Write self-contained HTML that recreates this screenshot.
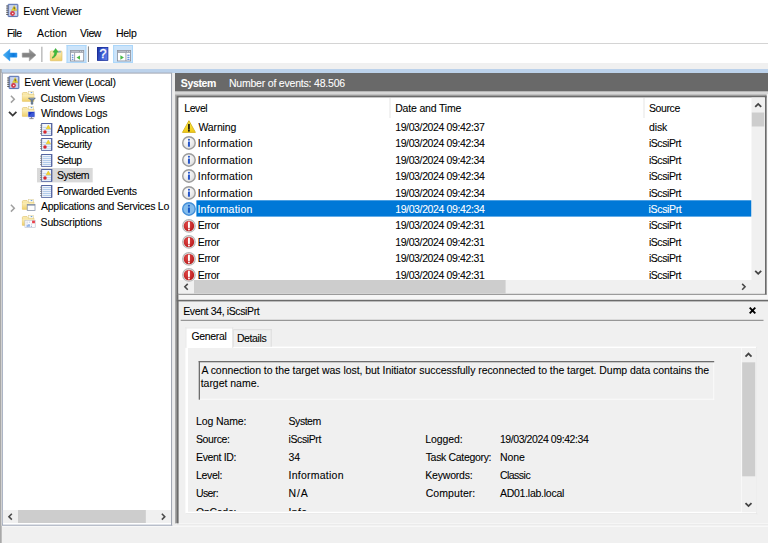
<!DOCTYPE html>
<html><head><meta charset="utf-8"><title>Event Viewer</title>
<style>
html,body{margin:0;padding:0;}
body{width:768px;height:543px;overflow:hidden;background:#f0f0f0;position:relative;font-family:"Liberation Sans",sans-serif;}
.t{position:absolute;white-space:nowrap;line-height:14px;height:14px;-webkit-text-stroke:0.08px currentColor;}
.b{position:absolute;}
svg{position:absolute;overflow:visible;}
</style></head><body>

<svg style="left:0;top:0" width="768" height="543" viewBox="0 0 768 543"><rect x="0" y="0" width="768" height="63" fill="#fff"/><rect x="0" y="43" width="768" height="1" fill="#d4d4d4"/><rect x="0" y="63" width="768" height="6" fill="#f0f0f0"/><rect x="0" y="69" width="768" height="4" fill="#bcd2eb"/><rect x="41.2" y="46.7" width="1.3" height="15.3" fill="#b4b4b4"/><rect x="66.6" y="45" width="19.8" height="17.9" fill="#cce4fa"/><rect x="66.6" y="45" width="19.8" height="1" fill="#aad6fa"/><rect x="66.6" y="61.9" width="19.8" height="1" fill="#aad6fa"/><rect x="66.6" y="45" width="1" height="17.9" fill="#aad6fa"/><rect x="85.39999999999999" y="45" width="1" height="17.9" fill="#aad6fa"/><rect x="87.9" y="46.4" width="1.1" height="15.6" fill="#8c8c8c"/><rect x="113.1" y="45" width="19.9" height="17.9" fill="#cce4fa"/><rect x="113.1" y="45" width="19.9" height="1" fill="#aad6fa"/><rect x="113.1" y="61.9" width="19.9" height="1" fill="#aad6fa"/><rect x="113.1" y="45" width="1" height="17.9" fill="#aad6fa"/><rect x="132.0" y="45" width="1" height="17.9" fill="#aad6fa"/><rect x="0" y="69" width="1.7" height="474" fill="#a8a8a8"/><rect x="1.7" y="73" width="169.5" height="452.8" fill="#fff"/><rect x="2.1" y="72.6" width="170.1" height="1" fill="#a3a8b3"/><rect x="2.1" y="72.6" width="0.8" height="453" fill="#98a2b6"/><rect x="171" y="73" width="1.2" height="452.8" fill="#a3a8b3"/><rect x="2.1" y="524.7" width="170.1" height="1.1" fill="#939cae"/><rect x="172.3" y="73" width="2.7" height="452" fill="#ececec"/><rect x="37" y="168" width="55.7" height="14.4" fill="#d9d9d9"/><rect x="2.9" y="510" width="168.1" height="13" fill="#f0f0f0"/><rect x="18" y="510" width="127.8" height="13" fill="#cdcdcd"/><rect x="175" y="73" width="593" height="18.6" fill="#696969"/><rect x="175" y="91.6" width="593" height="2.8" fill="#d6d6d6"/><rect x="175" y="94.4" width="591.8" height="429" fill="#a8a8a8"/><rect x="176.6" y="95.8" width="591.4" height="428.5" fill="#6b6b6b"/><rect x="178.6" y="97.6" width="589.4" height="426.7" fill="#f0f0f0"/><rect x="178.6" y="97.6" width="586.3" height="196" fill="#fff"/><rect x="178.6" y="293.6" width="588.2" height="1.2" fill="#6b6b6b"/><rect x="764.9" y="95.8" width="1.9" height="199" fill="#6b6b6b"/><rect x="766.8" y="94.4" width="1.2" height="201" fill="#f8f8f8"/><rect x="177.5" y="294.8" width="590.5" height="5" fill="#f6f6f6"/><rect x="175" y="294.8" width="1.6" height="5" fill="#a8a8a8"/><rect x="176.6" y="294.8" width="1.8" height="5" fill="#6b6b6b"/><rect x="389.5" y="98" width="1" height="20" fill="#e5e5e5"/><rect x="643.5" y="98" width="1" height="20" fill="#e5e5e5"/><rect x="196.4" y="200.3" width="555.1" height="16.3" fill="#0078d7"/><rect x="751.5" y="97.6" width="13.4" height="182.5" fill="#f0f0f0"/><rect x="751.8" y="112.5" width="12.4" height="14" fill="#cdcdcd"/><rect x="178.6" y="280" width="586.3" height="13.6" fill="#f0f0f0"/><rect x="194" y="280" width="311.6" height="13.6" fill="#cdcdcd"/><rect x="176.6" y="299.8" width="591.4" height="1.6" fill="#6b6b6b"/><rect x="180.7" y="319.8" width="582.8" height="1" fill="#828282"/><rect x="185.4" y="346.6" width="571.8" height="167.6" fill="#fff"/><rect x="185.4" y="513.2" width="571.8" height="1" fill="#e6e6e6"/><rect x="756.1999999999999" y="346.6" width="1" height="167.6" fill="#e6e6e6"/><rect x="188" y="348" width="553.3" height="163.8" fill="#f0f0f0"/><rect x="233" y="329.2" width="38.7" height="17.5" fill="#f0f0f0"/><rect x="233" y="329.2" width="38.7" height="1" fill="#dcdcdc"/><rect x="233" y="329.2" width="1" height="17.5" fill="#dcdcdc"/><rect x="270.7" y="329.2" width="1" height="17.5" fill="#dcdcdc"/><rect x="185.4" y="327.4" width="47.8" height="20.5" fill="#fff"/><rect x="185.4" y="327.4" width="47.8" height="1" fill="#e4e4e4"/><rect x="185.4" y="327.4" width="1" height="20.5" fill="#e4e4e4"/><rect x="232.2" y="327.4" width="1" height="20.5" fill="#e4e4e4"/><rect x="198.7" y="361" width="515.5" height="38.7" fill="#f0f0f0"/><rect x="198.7" y="398.7" width="515.5" height="1" fill="#fbfbfb"/><rect x="713.2" y="361" width="1" height="38.7" fill="#fbfbfb"/><rect x="198.7" y="361" width="515.5" height="1.3" fill="#6e6e6e"/><rect x="198.7" y="361" width="1.3" height="38.7" fill="#6e6e6e"/><rect x="741.7" y="348" width="14.7" height="164.3" fill="#f0f0f0"/><rect x="742.2" y="362.3" width="13" height="114" fill="#cdcdcd"/><rect x="176" y="523.4" width="592" height="1.2" fill="#fbfbfb"/><rect x="2" y="525.8" width="766" height="1" fill="#fafafa"/></svg>
<svg style="left:5.9px;top:4.1px" width="12.2" height="12.9" viewBox="0 0 12.2 12.9"><rect x="2.1" y="0.3" width="9.8" height="12.3" rx="0.5" fill="#a3b5de" stroke="#566eb0" stroke-width="1"/><rect x="3.3" y="1.3" width="7.6" height="10.3" fill="#cdd8f0"/><path d="M3.3 3.2h7.6M3.3 5.2h7.6M3.3 7.2h7.6M3.3 9.2h7.6" stroke="#b4c2e2" stroke-width="0.5"/><path d="M0.2 2h2.2M0.2 4.1h2.2M0.2 6.2h2.2M0.2 8.3h2.2M0.2 10.4h2.2" stroke="#4a4a4a" stroke-width="1"/><path d="M8.2 1.6 L10.9 6.6 H5.5Z" fill="#ead32a" stroke="#c8ac18" stroke-width="0.4"/><path d="M8.2 3.2V5" stroke="#222" stroke-width="0.8"/><circle cx="8.2" cy="5.9" r="0.4" fill="#222"/><circle cx="6.5" cy="9.5" r="2.4" fill="#d23a4a"/><circle cx="6.7" cy="9.5" r="0.8" fill="#fbe4e6"/></svg>
<span class="t" style="left:23.30px;top:4.30px;font-size:10.5px;color:#000;letter-spacing:-0.290px;">Event Viewer</span>
<span class="t" style="left:7.00px;top:26.30px;font-size:10.5px;color:#000;letter-spacing:-0.641px;">File</span>
<span class="t" style="left:37.10px;top:26.30px;font-size:10.5px;color:#000;letter-spacing:0.113px;">Action</span>
<span class="t" style="left:80.00px;top:26.30px;font-size:10.5px;color:#000;letter-spacing:-0.376px;">View</span>
<span class="t" style="left:116.00px;top:26.30px;font-size:10.5px;color:#000;letter-spacing:-0.286px;">Help</span>
<svg style="left:0;top:0" width="0" height="0"><defs><linearGradient id="gBack" x1="0" y1="0" x2="1" y2="0"><stop offset="0" stop-color="#4cb4f6"/><stop offset="0.75" stop-color="#0a78dc"/><stop offset="1" stop-color="#2a90e8"/></linearGradient><linearGradient id="gFwd" x1="0" y1="0" x2="0" y2="1"><stop offset="0" stop-color="#a4a4a4"/><stop offset="0.5" stop-color="#808080"/><stop offset="1" stop-color="#9a9a9a"/></linearGradient><linearGradient id="gHelp" x1="0" y1="0" x2="1" y2="0.3"><stop offset="0" stop-color="#1a2f9c"/><stop offset="0.6" stop-color="#3c5cd4"/><stop offset="1" stop-color="#5a7ae6"/></linearGradient><linearGradient id="gFold" x1="0" y1="0" x2="0" y2="1"><stop offset="0" stop-color="#fbeeb8"/><stop offset="1" stop-color="#efcf6a"/></linearGradient><radialGradient id="gInfo" cx="0.4" cy="0.35" r="0.7"><stop offset="0" stop-color="#ffffff"/><stop offset="1" stop-color="#dcdcdc"/></radialGradient><radialGradient id="gErr" cx="0.4" cy="0.35" r="0.7"><stop offset="0" stop-color="#e04848"/><stop offset="1" stop-color="#b81c1c"/></radialGradient><linearGradient id="gWarn" x1="0" y1="0" x2="0" y2="1"><stop offset="0" stop-color="#fff04a"/><stop offset="1" stop-color="#f0c818"/></linearGradient></defs></svg>
<svg style="left:2.5px;top:48.6px" width="14.2" height="12.2" viewBox="0 0 14.2 12.2"><path d="M0.2 6.1 L6.9 0.2 V3.9 H13.7 Q14 3.9 14 4.3 V7.9 Q14 8.3 13.7 8.3 H6.9 V12Z" fill="url(#gBack)" stroke="#3aa0f0" stroke-width="0.5"/></svg>
<svg style="left:22.2px;top:48.6px" width="14.2" height="12.2" viewBox="0 0 14.2 12.2"><path d="M14 6.1 L7.3 0.2 V3.9 H0.5 Q0.2 3.9 0.2 4.3 V7.9 Q0.2 8.3 0.5 8.3 H7.3 V12Z" fill="url(#gFwd)" stroke="#9a9a9a" stroke-width="0.5"/></svg>
<svg style="left:50px;top:48.2px" width="12.4" height="13" viewBox="0 0 12.4 13"><path d="M0.3 4 Q0.3 3 1.2 3 H11 Q12 3 12 4 V12.4 Q12 12.8 11.6 12.8 H0.7 Q0.3 12.8 0.3 12.4Z" fill="url(#gFold)" stroke="#dcbc5c" stroke-width="0.6"/><rect x="8.4" y="3.3" width="2.4" height="1.1" fill="#5a94dc"/><path d="M2 9.6 C3.6 8.6 4.6 6.6 4.6 4.2 H3.1 L5.6 0.4 L8.4 4.2 H6.8 C6.8 7.2 5 9.2 2.6 10.2Z" fill="#3cbc3c" stroke="#249424" stroke-width="0.4"/></svg>
<svg style="left:69.9px;top:50px" width="14.1" height="11.4" viewBox="0 0 14.1 11.4"><rect x="0.4" y="0.4" width="13.3" height="10.6" fill="#fff" stroke="#878c98" stroke-width="0.8"/><rect x="0.4" y="0.4" width="13.3" height="2.4" fill="#979da8"/><path d="M1.4 1.5h7.6" stroke="#c8ccd4" stroke-width="0.7"/><path d="M10 1.5h1.2M12 1.5h1" stroke="#d8dce4" stroke-width="0.8"/><path d="M4.6 2.8V11" stroke="#878c98" stroke-width="0.8"/><path d="M1.8 5.2h1.6M1.8 7.3h1.6M1.8 9.3h1.6" stroke="#3c78d8" stroke-width="1"/><path d="M10 5.4 V9.8 L6.5 7.6Z" fill="#48b848"/></svg>
<svg style="left:96.9px;top:47.3px" width="11.2" height="13.7" viewBox="0 0 11.2 13.7"><rect x="0" y="0" width="11.2" height="13.7" rx="0.6" fill="url(#gHelp)"/><rect x="0.3" y="0.3" width="10.6" height="13.1" fill="none" stroke="#16288c" stroke-width="0.6"/></svg>
<span class="t" style="left:99.4px;top:47.3px;font-size:12.5px;color:#fff;-webkit-text-stroke:0.3px #fff;">?</span>
<svg style="left:116.8px;top:50px" width="14" height="11.4" viewBox="0 0 14.1 11.4"><rect x="0.4" y="0.4" width="13.3" height="10.6" fill="#fff" stroke="#878c98" stroke-width="0.8"/><rect x="0.4" y="0.4" width="13.3" height="2.4" fill="#979da8"/><path d="M1.4 1.5h7.6" stroke="#c8ccd4" stroke-width="0.7"/><path d="M10 1.5h1.2M12 1.5h1" stroke="#d8dce4" stroke-width="0.8"/><path d="M9 2.8V11" stroke="#878c98" stroke-width="0.8"/><path d="M10.4 5.2h2.2M10.4 7.3h2.2M10.4 9.3h2.2" stroke="#3c78d8" stroke-width="1"/><path d="M3.4 5.2 V9.8 L7 7.5Z" fill="#48b848"/></svg>
<span class="t" style="left:24.20px;top:74.90px;font-size:10.5px;color:#000;letter-spacing:-0.262px;">Event Viewer (Local)</span>
<span class="t" style="left:40.50px;top:90.50px;font-size:10.5px;color:#000;letter-spacing:-0.220px;">Custom Views</span>
<span class="t" style="left:41.00px;top:106.00px;font-size:10.5px;color:#000;letter-spacing:-0.166px;">Windows Logs</span>
<span class="t" style="left:56.90px;top:121.60px;font-size:10.5px;color:#000;letter-spacing:0.142px;">Application</span>
<span class="t" style="left:56.90px;top:137.10px;font-size:10.5px;color:#000;letter-spacing:-0.420px;">Security</span>
<span class="t" style="left:56.90px;top:152.70px;font-size:10.5px;color:#000;letter-spacing:-0.563px;">Setup</span>
<span class="t" style="left:56.90px;top:168.20px;font-size:10.5px;color:#000;letter-spacing:-0.473px;">System</span>
<span class="t" style="left:56.90px;top:183.80px;font-size:10.5px;color:#000;letter-spacing:-0.345px;">Forwarded Events</span>
<span class="t" style="left:41.00px;top:199.40px;font-size:10.5px;color:#000;letter-spacing:-0.242px;">Applications and Services Lo</span>
<span class="t" style="left:40.50px;top:214.90px;font-size:10.5px;color:#000;letter-spacing:-0.128px;">Subscriptions</span>
<svg style="left:7px;top:76.1px" width="12.2" height="12.9" viewBox="0 0 12.2 12.9"><rect x="2.1" y="0.3" width="9.8" height="12.3" rx="0.5" fill="#a3b5de" stroke="#566eb0" stroke-width="1"/><rect x="3.3" y="1.3" width="7.6" height="10.3" fill="#cdd8f0"/><path d="M3.3 3.2h7.6M3.3 5.2h7.6M3.3 7.2h7.6M3.3 9.2h7.6" stroke="#b4c2e2" stroke-width="0.5"/><path d="M0.2 2h2.2M0.2 4.1h2.2M0.2 6.2h2.2M0.2 8.3h2.2M0.2 10.4h2.2" stroke="#4a4a4a" stroke-width="1"/><path d="M8.2 1.6 L10.9 6.6 H5.5Z" fill="#ead32a" stroke="#c8ac18" stroke-width="0.4"/><path d="M8.2 3.2V5" stroke="#222" stroke-width="0.8"/><circle cx="8.2" cy="5.9" r="0.4" fill="#222"/><circle cx="6.5" cy="9.5" r="2.4" fill="#d23a4a"/><circle cx="6.7" cy="9.5" r="0.8" fill="#fbe4e6"/></svg>
<svg style="left:22.2px;top:90.6px" width="13.6" height="13.6" viewBox="0 0 14 14"><path d="M0.4 2.6 Q0.4 1.6 1.4 1.6 H5.2 L6.4 2.8 H11.4 Q12.2 2.8 12.2 3.6 V10.6 H0.4Z" fill="url(#gFold)" stroke="#dcbc5c" stroke-width="0.6"/><rect x="6.6" y="0.6" width="5" height="2.6" fill="#fffdf4" stroke="#d8c98e" stroke-width="0.5"/><rect x="9" y="1.2" width="1.6" height="0.9" fill="#4c8cd8"/><path d="M0.4 4.2 H12.2 V10.6 H0.4Z" fill="url(#gFold)"/><path d="M6.6 7.2 H13.8 L11.2 10 V13.6 H9.4 V10Z" fill="#6d8299" stroke="#44586e" stroke-width="0.5"/><path d="M7.8 7.9h4.8" stroke="#aebccb" stroke-width="0.6"/></svg>
<svg style="left:22.2px;top:106px" width="13.6" height="13.6" viewBox="0 0 14 14"><path d="M0.4 2.6 Q0.4 1.6 1.4 1.6 H5.2 L6.4 2.8 H11.4 Q12.2 2.8 12.2 3.6 V10.6 H0.4Z" fill="url(#gFold)" stroke="#dcbc5c" stroke-width="0.6"/><rect x="6.6" y="0.6" width="5" height="2.6" fill="#fffdf4" stroke="#d8c98e" stroke-width="0.5"/><rect x="9" y="1.2" width="1.6" height="0.9" fill="#4c8cd8"/><path d="M0.4 4.2 H12.2 V10.6 H0.4Z" fill="url(#gFold)"/><rect x="6.2" y="5.9" width="7" height="5.5" fill="#1c34c0" stroke="#d4daf0" stroke-width="0.6"/><path d="M7 10.6 L9.6 7.4 L12.6 6.6 V10.8Z" fill="#4a6ae0" opacity="0.7"/><path d="M7.6 13h4.4" stroke="#778" stroke-width="0.9"/><path d="M9.8 11.5v1.2" stroke="#778" stroke-width="1.2"/></svg>
<svg style="left:39.9px;top:122.8px" width="12.2" height="12.9" viewBox="0 0 12.2 12.9"><rect x="1.6" y="0.5" width="10.1" height="12" fill="#f2f6fc" stroke="#6070a8" stroke-width="0.9"/><path d="M1.6 0.5 H11.7 V12.5" fill="none" stroke="#5464a0" stroke-width="1.2"/><path d="M0.2 2.2h2M0.2 4.3h2M0.2 6.4h2M0.2 8.5h2M0.2 10.6h2" stroke="#777" stroke-width="0.9"/><path d="M3 4.4h3M3 6.6h8M3 8.7h8M3 10.8h8" stroke="#aac4e6" stroke-width="0.7"/><path d="M8.3 2 L10.6 5.8 H6Z" fill="#f4d62c" stroke="#d0b01c" stroke-width="0.4"/><circle cx="5" cy="8.9" r="1.75" fill="#d8282f"/></svg>
<svg style="left:39.9px;top:138.3px" width="12.2" height="12.9" viewBox="0 0 12.2 12.9"><rect x="1.6" y="0.5" width="10.1" height="12" fill="#f2f6fc" stroke="#6070a8" stroke-width="0.9"/><path d="M1.6 0.5 H11.7 V12.5" fill="none" stroke="#5464a0" stroke-width="1.2"/><path d="M0.2 2.2h2M0.2 4.3h2M0.2 6.4h2M0.2 8.5h2M0.2 10.6h2" stroke="#777" stroke-width="0.9"/><path d="M3 4.4h3M3 6.6h8M3 8.7h8M3 10.8h8" stroke="#aac4e6" stroke-width="0.7"/><path d="M8.3 2 L10.6 5.8 H6Z" fill="#f4d62c" stroke="#d0b01c" stroke-width="0.4"/><circle cx="5" cy="8.9" r="1.75" fill="#d8282f"/></svg>
<svg style="left:39.9px;top:153.9px" width="12.2" height="12.9" viewBox="0 0 12.2 12.9"><rect x="1.6" y="0.5" width="10.1" height="12" fill="#f2f6fc" stroke="#6070a8" stroke-width="0.9"/><path d="M1.6 0.5 H11.7 V12.5" fill="none" stroke="#5464a0" stroke-width="1.2"/><path d="M0.2 2.2h2M0.2 4.3h2M0.2 6.4h2M0.2 8.5h2M0.2 10.6h2" stroke="#777" stroke-width="0.9"/><path d="M3 2.6h8M3 4.6h8M3 6.6h8M3 8.6h8M3 10.6h8" stroke="#a4c2e6" stroke-width="0.9"/></svg>
<svg style="left:39.9px;top:169.4px" width="12.2" height="12.9" viewBox="0 0 12.2 12.9"><rect x="1.6" y="0.5" width="10.1" height="12" fill="#f2f6fc" stroke="#6070a8" stroke-width="0.9"/><path d="M1.6 0.5 H11.7 V12.5" fill="none" stroke="#5464a0" stroke-width="1.2"/><path d="M0.2 2.2h2M0.2 4.3h2M0.2 6.4h2M0.2 8.5h2M0.2 10.6h2" stroke="#777" stroke-width="0.9"/><path d="M3 4.4h3M3 6.6h8M3 8.7h8M3 10.8h8" stroke="#aac4e6" stroke-width="0.7"/><path d="M8.3 2 L10.6 5.8 H6Z" fill="#f4d62c" stroke="#d0b01c" stroke-width="0.4"/><circle cx="5" cy="8.9" r="1.75" fill="#d8282f"/></svg>
<svg style="left:39.9px;top:185px" width="12.2" height="12.9" viewBox="0 0 12.2 12.9"><rect x="1.6" y="0.5" width="10.1" height="12" fill="#f2f6fc" stroke="#6070a8" stroke-width="0.9"/><path d="M1.6 0.5 H11.7 V12.5" fill="none" stroke="#5464a0" stroke-width="1.2"/><path d="M0.2 2.2h2M0.2 4.3h2M0.2 6.4h2M0.2 8.5h2M0.2 10.6h2" stroke="#777" stroke-width="0.9"/><path d="M3 2.6h8M3 4.6h8M3 6.6h8M3 8.6h8M3 10.6h8" stroke="#a4c2e6" stroke-width="0.9"/></svg>
<svg style="left:22.2px;top:199.4px" width="13.6" height="13.6" viewBox="0 0 14 14"><path d="M0.4 2.6 Q0.4 1.6 1.4 1.6 H5.2 L6.4 2.8 H11.4 Q12.2 2.8 12.2 3.6 V10.6 H0.4Z" fill="url(#gFold)" stroke="#dcbc5c" stroke-width="0.6"/><rect x="6.6" y="0.6" width="5" height="2.6" fill="#fffdf4" stroke="#d8c98e" stroke-width="0.5"/><rect x="9" y="1.2" width="1.6" height="0.9" fill="#4c8cd8"/><path d="M0.4 4.2 H12.2 V10.6 H0.4Z" fill="url(#gFold)"/><rect x="5.4" y="5.6" width="8" height="6.2" fill="#fdfdfd" stroke="#8794aa" stroke-width="0.8"/><path d="M5.4 6.2h8" stroke="#7b889f" stroke-width="1.1"/></svg>
<svg style="left:22.2px;top:215px" width="13.6" height="13.6" viewBox="0 0 14 14"><path d="M0.4 2.6 Q0.4 1.6 1.4 1.6 H5.2 L6.4 2.8 H11.4 Q12.2 2.8 12.2 3.6 V10.6 H0.4Z" fill="url(#gFold)" stroke="#dcbc5c" stroke-width="0.6"/><rect x="6.6" y="0.6" width="5" height="2.6" fill="#fffdf4" stroke="#d8c98e" stroke-width="0.5"/><rect x="9" y="1.2" width="1.6" height="0.9" fill="#4c8cd8"/><path d="M0.4 4.2 H12.2 V10.6 H0.4Z" fill="url(#gFold)"/><rect x="3" y="5.4" width="10.6" height="7.4" fill="#fcfcfe" stroke="#b4bccc" stroke-width="0.6"/><path d="M4.6 7.4h1.4M7 7.4h1.4M4.6 9.4h1.4M9.2 9.4h1.2" stroke="#b0bcd8" stroke-width="0.8"/><path d="M4.6 11.4h1.6M7.2 9.6v2.4" stroke="#3c78d8" stroke-width="1.1"/><path d="M9.6 11v1.4" stroke="#8aa0c8" stroke-width="0.9"/><rect x="10.4" y="5.8" width="2.9" height="2.7" fill="#e8404c"/></svg>
<svg style="left:0;top:0" width="768" height="543"><path d="M10.9 95.8 L14.299999999999999 99.2 L10.9 102.60000000000001" fill="none" stroke="#a0a0a0" stroke-width="1.5"/></svg>
<svg style="left:0;top:0" width="768" height="543"><path d="M9.0 111.85000000000001 L12.7 115.55 L16.4 111.85000000000001" fill="none" stroke="#383838" stroke-width="1.8"/></svg>
<svg style="left:0;top:0" width="768" height="543"><path d="M10.9 204.79999999999998 L14.299999999999999 208.2 L10.9 211.6" fill="none" stroke="#a0a0a0" stroke-width="1.5"/></svg>
<svg style="left:0;top:0" width="768" height="543"><path d="M11.85 513.8000000000001 L8.950000000000001 516.7 L11.85 519.6" fill="none" stroke="#4a4a4a" stroke-width="1.6"/></svg>
<svg style="left:0;top:0" width="768" height="543"><path d="M161.85000000000002 513.8000000000001 L164.75 516.7 L161.85000000000002 519.6" fill="none" stroke="#4a4a4a" stroke-width="1.6"/></svg>
<span class="t" style="left:180.80px;top:75.80px;font-size:10.5px;color:#fff;letter-spacing:-0.352px;font-weight:bold;">System</span>
<span class="t" style="left:228.90px;top:75.80px;font-size:10.5px;color:#fff;letter-spacing:-0.197px;">Number of events: 48.506</span>
<span class="t" style="left:184.20px;top:101.20px;font-size:10.5px;color:#000;letter-spacing:-0.402px;">Level</span>
<span class="t" style="left:395.20px;top:101.20px;font-size:10.5px;color:#000;letter-spacing:-0.175px;">Date and Time</span>
<span class="t" style="left:648.90px;top:101.20px;font-size:10.5px;color:#000;letter-spacing:-0.376px;">Source</span>
<span class="t" style="left:198.45px;top:119.70px;font-size:10.5px;color:#000;letter-spacing:-0.136px;">Warning</span>
<span class="t" style="left:395.20px;top:119.70px;font-size:10.5px;color:#000;letter-spacing:-0.375px;">19/03/2024 09:42:37</span>
<span class="t" style="left:648.90px;top:119.70px;font-size:10.5px;color:#000;letter-spacing:-0.079px;">disk</span>
<svg style="left:182.3px;top:120.0px" width="13.9" height="13.9" viewBox="0 0 14 14"><path d="M7 0.7 L13.5 12.5 H0.5Z" fill="url(#gWarn)" stroke="#d4b21a" stroke-width="0.9" stroke-linejoin="round"/><path d="M7 4.6V9" stroke="#111" stroke-width="1.7" stroke-linecap="round"/><circle cx="7" cy="10.8" r="0.95" fill="#111"/></svg>
<span class="t" style="left:197.80px;top:136.15px;font-size:10.5px;color:#000;letter-spacing:0.237px;">Information</span>
<span class="t" style="left:395.20px;top:136.15px;font-size:10.5px;color:#000;letter-spacing:-0.375px;">19/03/2024 09:42:34</span>
<span class="t" style="left:648.90px;top:136.15px;font-size:10.5px;color:#000;letter-spacing:-0.428px;">iScsiPrt</span>
<svg style="left:182.3px;top:136.35px" width="13.9" height="13.9" viewBox="0 0 14 14"><circle cx="7" cy="7" r="6.3" fill="url(#gInfo)" stroke="#9c9c9c" stroke-width="1.4"/><circle cx="7" cy="3.7" r="1.05" fill="#2454c8"/><path d="M7 5.6V10.8" stroke="#2454c8" stroke-width="2"/></svg>
<span class="t" style="left:197.80px;top:152.60px;font-size:10.5px;color:#000;letter-spacing:0.237px;">Information</span>
<span class="t" style="left:395.20px;top:152.60px;font-size:10.5px;color:#000;letter-spacing:-0.375px;">19/03/2024 09:42:34</span>
<span class="t" style="left:648.90px;top:152.60px;font-size:10.5px;color:#000;letter-spacing:-0.428px;">iScsiPrt</span>
<svg style="left:182.3px;top:152.79999999999998px" width="13.9" height="13.9" viewBox="0 0 14 14"><circle cx="7" cy="7" r="6.3" fill="url(#gInfo)" stroke="#9c9c9c" stroke-width="1.4"/><circle cx="7" cy="3.7" r="1.05" fill="#2454c8"/><path d="M7 5.6V10.8" stroke="#2454c8" stroke-width="2"/></svg>
<span class="t" style="left:197.80px;top:169.05px;font-size:10.5px;color:#000;letter-spacing:0.237px;">Information</span>
<span class="t" style="left:395.20px;top:169.05px;font-size:10.5px;color:#000;letter-spacing:-0.375px;">19/03/2024 09:42:34</span>
<span class="t" style="left:648.90px;top:169.05px;font-size:10.5px;color:#000;letter-spacing:-0.428px;">iScsiPrt</span>
<svg style="left:182.3px;top:169.25px" width="13.9" height="13.9" viewBox="0 0 14 14"><circle cx="7" cy="7" r="6.3" fill="url(#gInfo)" stroke="#9c9c9c" stroke-width="1.4"/><circle cx="7" cy="3.7" r="1.05" fill="#2454c8"/><path d="M7 5.6V10.8" stroke="#2454c8" stroke-width="2"/></svg>
<span class="t" style="left:197.80px;top:185.50px;font-size:10.5px;color:#000;letter-spacing:0.237px;">Information</span>
<span class="t" style="left:395.20px;top:185.50px;font-size:10.5px;color:#000;letter-spacing:-0.375px;">19/03/2024 09:42:34</span>
<span class="t" style="left:648.90px;top:185.50px;font-size:10.5px;color:#000;letter-spacing:-0.428px;">iScsiPrt</span>
<svg style="left:182.3px;top:185.7px" width="13.9" height="13.9" viewBox="0 0 14 14"><circle cx="7" cy="7" r="6.3" fill="url(#gInfo)" stroke="#9c9c9c" stroke-width="1.4"/><circle cx="7" cy="3.7" r="1.05" fill="#2454c8"/><path d="M7 5.6V10.8" stroke="#2454c8" stroke-width="2"/></svg>
<span class="t" style="left:197.45px;top:201.95px;font-size:10.5px;color:#fff;letter-spacing:0.237px;">Information</span>
<span class="t" style="left:395.20px;top:201.95px;font-size:10.5px;color:#fff;letter-spacing:-0.375px;">19/03/2024 09:42:34</span>
<span class="t" style="left:648.60px;top:201.95px;font-size:10.5px;color:#fff;letter-spacing:-0.342px;">iScsiPrt</span>
<svg style="left:182.3px;top:202.14999999999998px" width="13.9" height="13.9" viewBox="0 0 14 14"><circle cx="7" cy="7" r="6.3" fill="#84bcec" stroke="#4690d8" stroke-width="1.4"/><circle cx="7" cy="3.7" r="1.05" fill="#1458c8"/><path d="M7 5.6V10.8" stroke="#1458c8" stroke-width="2"/></svg>
<span class="t" style="left:197.80px;top:218.40px;font-size:10.5px;color:#000;letter-spacing:-0.361px;">Error</span>
<span class="t" style="left:395.20px;top:218.40px;font-size:10.5px;color:#000;letter-spacing:-0.375px;">19/03/2024 09:42:31</span>
<span class="t" style="left:648.90px;top:218.40px;font-size:10.5px;color:#000;letter-spacing:-0.428px;">iScsiPrt</span>
<svg style="left:182.3px;top:218.79999999999995px" width="13.9" height="13.9" viewBox="0 0 14 14"><circle cx="7" cy="7" r="6.9" fill="#b4b4b4"/><circle cx="7" cy="7" r="6" fill="#dedede"/><circle cx="7" cy="7" r="5.3" fill="url(#gErr)"/><path d="M7 3.4V8.4" stroke="#fff" stroke-width="1.9" stroke-linecap="round"/><circle cx="7" cy="10.6" r="0.95" fill="#fff"/></svg>
<span class="t" style="left:197.80px;top:234.85px;font-size:10.5px;color:#000;letter-spacing:-0.361px;">Error</span>
<span class="t" style="left:395.20px;top:234.85px;font-size:10.5px;color:#000;letter-spacing:-0.375px;">19/03/2024 09:42:31</span>
<span class="t" style="left:648.90px;top:234.85px;font-size:10.5px;color:#000;letter-spacing:-0.428px;">iScsiPrt</span>
<svg style="left:182.3px;top:235.24999999999997px" width="13.9" height="13.9" viewBox="0 0 14 14"><circle cx="7" cy="7" r="6.9" fill="#b4b4b4"/><circle cx="7" cy="7" r="6" fill="#dedede"/><circle cx="7" cy="7" r="5.3" fill="url(#gErr)"/><path d="M7 3.4V8.4" stroke="#fff" stroke-width="1.9" stroke-linecap="round"/><circle cx="7" cy="10.6" r="0.95" fill="#fff"/></svg>
<span class="t" style="left:197.80px;top:251.30px;font-size:10.5px;color:#000;letter-spacing:-0.361px;">Error</span>
<span class="t" style="left:395.20px;top:251.30px;font-size:10.5px;color:#000;letter-spacing:-0.375px;">19/03/2024 09:42:31</span>
<span class="t" style="left:648.90px;top:251.30px;font-size:10.5px;color:#000;letter-spacing:-0.428px;">iScsiPrt</span>
<svg style="left:182.3px;top:251.7px" width="13.9" height="13.9" viewBox="0 0 14 14"><circle cx="7" cy="7" r="6.9" fill="#b4b4b4"/><circle cx="7" cy="7" r="6" fill="#dedede"/><circle cx="7" cy="7" r="5.3" fill="url(#gErr)"/><path d="M7 3.4V8.4" stroke="#fff" stroke-width="1.9" stroke-linecap="round"/><circle cx="7" cy="10.6" r="0.95" fill="#fff"/></svg>
<span class="t" style="left:197.80px;top:267.75px;font-size:10.5px;color:#000;letter-spacing:-0.361px;">Error</span>
<span class="t" style="left:395.20px;top:267.75px;font-size:10.5px;color:#000;letter-spacing:-0.375px;">19/03/2024 09:42:31</span>
<span class="t" style="left:648.90px;top:267.75px;font-size:10.5px;color:#000;letter-spacing:-0.428px;">iScsiPrt</span>
<svg style="left:182.3px;top:268.15px" width="13.9" height="13.9" viewBox="0 0 14 14"><circle cx="7" cy="7" r="6.9" fill="#b4b4b4"/><circle cx="7" cy="7" r="6" fill="#dedede"/><circle cx="7" cy="7" r="5.3" fill="url(#gErr)"/><path d="M7 3.4V8.4" stroke="#fff" stroke-width="1.9" stroke-linecap="round"/><circle cx="7" cy="10.6" r="0.95" fill="#fff"/></svg>
<svg style="left:0;top:0" width="768" height="543"><path d="M755.2 106.9 L758.2 103.9 L761.2 106.9" fill="none" stroke="#444444" stroke-width="1.8"/></svg>
<svg style="left:0;top:0" width="768" height="543"><path d="M755.2 270.8 L758.2 273.8 L761.2 270.8" fill="none" stroke="#444444" stroke-width="1.8"/></svg>
<svg style="left:0;top:0" width="768" height="543"><path d="M187.75 283.90000000000003 L184.85000000000002 286.8 L187.75 289.7" fill="none" stroke="#4a4a4a" stroke-width="1.6"/></svg>
<svg style="left:0;top:0" width="768" height="543"><path d="M742.15 283.90000000000003 L745.0500000000001 286.8 L742.15 289.7" fill="none" stroke="#4a4a4a" stroke-width="1.6"/></svg>
<span class="t" style="left:183.20px;top:304.20px;font-size:10.5px;color:#000;letter-spacing:-0.375px;">Event 34, iScsiPrt</span>
<svg style="left:0;top:0" width="768" height="543"><path d="M749.7 307.7 L755.3 313.3 M755.3 307.7 L749.7 313.3" stroke="#000" stroke-width="1.9"/></svg>
<span class="t" style="left:191.40px;top:329.30px;font-size:10.5px;color:#000;letter-spacing:-0.310px;">General</span>
<span class="t" style="left:236.90px;top:330.70px;font-size:10.5px;color:#000;letter-spacing:-0.393px;">Details</span>
<span class="t" style="left:201.45px;top:362.70px;font-size:10.5px;color:#000;letter-spacing:-0.053px;">A connection to the target was lost, but Initiator successfully reconnected to the target. Dump data contains the</span>
<span class="t" style="left:200.70px;top:375.70px;font-size:10.5px;color:#000;letter-spacing:-0.023px;">target name.</span>
<span class="t" style="left:196.00px;top:413.60px;font-size:10.5px;color:#000;letter-spacing:-0.109px;">Log Name:</span>
<span class="t" style="left:288.60px;top:413.60px;font-size:10.5px;color:#000;letter-spacing:-0.473px;">System</span>
<span class="t" style="left:196.00px;top:431.90px;font-size:10.5px;color:#000;letter-spacing:-0.381px;">Source:</span>
<span class="t" style="left:288.60px;top:431.90px;font-size:10.5px;color:#000;letter-spacing:-0.406px;">iScsiPrt</span>
<span class="t" style="left:425.30px;top:431.90px;font-size:10.5px;color:#000;letter-spacing:-0.111px;">Logged:</span>
<span class="t" style="left:499.90px;top:431.90px;font-size:10.5px;color:#000;letter-spacing:-0.414px;">19/03/2024 09:42:34</span>
<span class="t" style="left:196.00px;top:450.00px;font-size:10.5px;color:#000;letter-spacing:-0.348px;">Event ID:</span>
<span class="t" style="left:288.60px;top:450.00px;font-size:10.5px;color:#000;letter-spacing:-0.188px;">34</span>
<span class="t" style="left:425.70px;top:450.00px;font-size:10.5px;color:#000;letter-spacing:-0.325px;">Task Category:</span>
<span class="t" style="left:499.90px;top:450.00px;font-size:10.5px;color:#000;letter-spacing:-0.070px;">None</span>
<span class="t" style="left:196.00px;top:468.20px;font-size:10.5px;color:#000;letter-spacing:-0.326px;">Level:</span>
<span class="t" style="left:288.60px;top:468.20px;font-size:10.5px;color:#000;letter-spacing:0.237px;">Information</span>
<span class="t" style="left:425.30px;top:468.20px;font-size:10.5px;color:#000;letter-spacing:-0.204px;">Keywords:</span>
<span class="t" style="left:499.90px;top:468.20px;font-size:10.5px;color:#000;letter-spacing:-0.516px;">Classic</span>
<span class="t" style="left:196.00px;top:486.40px;font-size:10.5px;color:#000;letter-spacing:-0.623px;">User:</span>
<span class="t" style="left:288.60px;top:486.40px;font-size:10.5px;color:#000;letter-spacing:0.767px;">N/A</span>
<span class="t" style="left:425.70px;top:486.40px;font-size:10.5px;color:#000;letter-spacing:0.071px;">Computer:</span>
<span class="t" style="left:499.90px;top:486.40px;font-size:10.5px;color:#000;letter-spacing:-0.248px;">AD01.lab.local</span>
<div class="b" style="left:0;top:500px;width:741px;height:11.3px;overflow:hidden;">
<span class="t" style="left:196.00px;top:4.60px;font-size:10.5px;color:#000;letter-spacing:-0.272px;">OpCode:</span>
<span class="t" style="left:288.60px;top:4.60px;font-size:10.5px;color:#000;letter-spacing:0.361px;">Info</span>
</div>
<svg style="left:0;top:0" width="768" height="543"><path d="M745.5 356.6 L748.5 353.6 L751.5 356.6" fill="none" stroke="#444444" stroke-width="1.8"/></svg>
<svg style="left:0;top:0" width="768" height="543"><path d="M745.5 503.1 L748.5 506.1 L751.5 503.1" fill="none" stroke="#444444" stroke-width="1.8"/></svg>
</body></html>
